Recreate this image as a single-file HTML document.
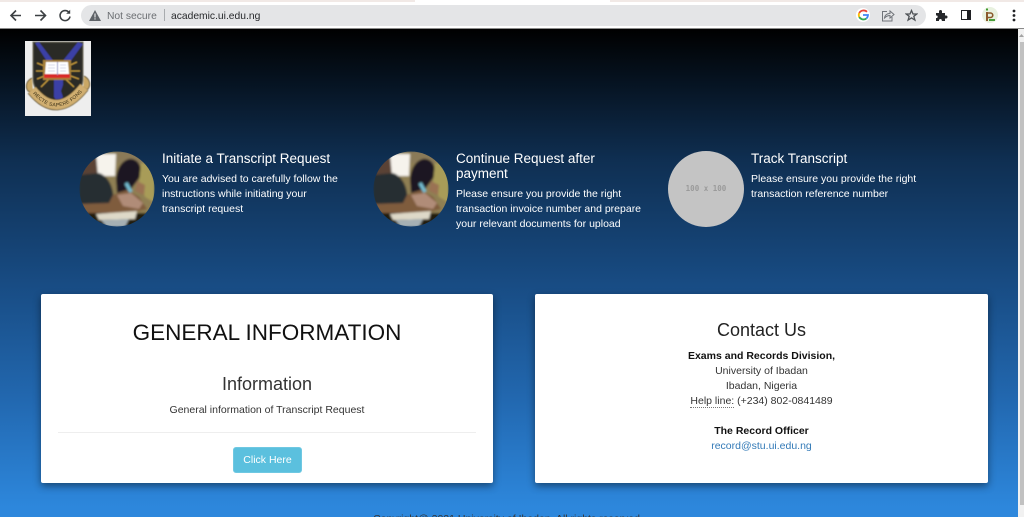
<!DOCTYPE html>
<html><head><meta charset="utf-8"><style>
*{box-sizing:border-box}
html,body{margin:0;padding:0;width:1024px;height:517px;overflow:hidden;background:#fff;font-family:"Liberation Sans",sans-serif}
.a{position:absolute;white-space:nowrap}
#page{position:absolute;left:0;top:29px;width:1018px;height:488px;overflow:hidden;background:linear-gradient(180deg,#000 0,#0f2f52 27%,#17497f 50%,#2268b0 76%,#2d87dc 98%,#2d87dc 100%)}
.h{color:#fff;font-size:13.5px;line-height:15px}
.p{color:#fff;font-size:10.5px;line-height:15px}
.card{position:absolute;background:#fff;border-radius:2px;box-shadow:0 3px 8px rgba(0,0,0,.45)}
.c{text-align:center;left:0;right:0;position:absolute}
.t{font-size:10.5px;line-height:15px;color:#333}
</style></head><body>
<div class="a" style="left:0;top:0;width:1024px;height:29px;background:#fff;border-bottom:1px solid #8a8a8a"></div>
<div class="a" style="left:0;top:0;width:415px;height:2px;background:#f1e9e6"></div>
<div class="a" style="left:610px;top:0;width:414px;height:2px;background:#f1e9e6"></div>
<svg class="a" style="left:0;top:0" width="90" height="29" viewBox="0 0 90 29" fill="none" stroke="#3c4043" stroke-width="1.6">
<path d="M21 15.500H11.500M16 10.500L11 15.500L16 20.500"/>
<path d="M35 15.500H45M40.500 10.500L45.500 15.500L40.500 20.500"/>
<path d="M69 12.500A5 5 0 1 0 70 16.500"/><path d="M70.200 9.800V13.800H66.200z" fill="#3c4043" stroke="none"/>
</svg>
<div class="a" style="left:81px;top:5px;width:845px;height:21px;border-radius:11px;background:#e4e5e7"></div>
<svg class="a" style="left:88px;top:9px" width="14" height="13" viewBox="0 0 14 13"><path d="M7 1L13 12H1z" fill="#5f6368"/><rect x="6.400" y="4.500" width="1.200" height="4" fill="#e4e5e7"/><rect x="6.400" y="9.300" width="1.200" height="1.200" fill="#e4e5e7"/></svg>
<div class="a" style="left:107px;top:9.500px;font-size:10.300px;line-height:13px;color:#6b6e72">Not secure</div>
<div class="a" style="left:164px;top:9px;width:1px;height:12px;background:#a8abae"></div>
<div class="a" style="left:171px;top:9.500px;font-size:10.300px;line-height:13px;color:#26282b">academic.ui.edu.ng</div>
<svg class="a" style="left:856px;top:8px" width="14" height="14" viewBox="1 1 14 14"><circle cx="8" cy="8" r="7" fill="#fff"/><path d="M12 4.800A5 5 0 0 0 4.200 6" fill="none" stroke="#ea4335" stroke-width="1.800"/><path d="M4.200 6A5 5 0 0 0 4.200 10" fill="none" stroke="#fbbc05" stroke-width="1.800"/><path d="M4.200 10A5 5 0 0 0 11.400 11.500" fill="none" stroke="#34a853" stroke-width="1.800"/><path d="M8 8H13A5 5 0 0 1 11.400 11.500" fill="none" stroke="#4285f4" stroke-width="1.800"/></svg>
<svg class="a" style="left:881px;top:9px" width="14" height="13" viewBox="0 0 14 13" fill="none" stroke="#70747a" stroke-width="1"><path d="M6 2.500H1.500V12H11V8"/><path d="M3.500 9C4 6 6 4.500 9 4.500V2L13 5.500L9 9V6.500C7 6.500 5 7.500 3.500 9z"/></svg>
<svg class="a" style="left:905px;top:9px" width="13" height="13" viewBox="0 0 13 13"><path d="M6.500 1.500L8 5H11.800L8.800 7.300L9.900 11L6.500 8.900L3.100 11L4.200 7.300L1.200 5H5z" fill="none" stroke="#4f5357" stroke-width="1.300"/></svg>
<svg class="a" style="left:935px;top:9px" width="13" height="13" viewBox="0 0 13 13"><path d="M1 4H4V2.500A1.500 1.500 0 0 1 7 2.500V4H10V6.500H11A1.500 1.500 0 0 1 11 9.500H10V12H6.800V11A1.500 1.500 0 0 0 4 11V12H1V9H2A1.500 1.500 0 0 0 2 6.500H1z" fill="#26282b"/></svg>
<div class="a" style="left:961px;top:10px;width:10px;height:10px;border:1.500px solid #202124;border-right-width:4px"></div>
<div class="a" style="left:982px;top:7px;width:16px;height:16px;border-radius:50%;background:#e8f1df"></div>
<svg class="a" style="left:984px;top:8px" width="12" height="14" viewBox="0 0 12 14"><rect x="2" y="0.500" width="2" height="2" fill="#3f9a2f"/><path d="M3 4V13" stroke="#8a5a2b" stroke-width="2"/><path d="M3 5H6.500A2.200 2.200 0 0 1 6.500 9.500H3" fill="none" stroke="#8a5a2b" stroke-width="1.600"/><rect x="5" y="11" width="6" height="2" fill="#4a9e3a"/></svg>
<svg class="a" style="left:1012px;top:9px" width="4" height="14"><circle cx="2" cy="2" r="1.400" fill="#202124"/><circle cx="2" cy="6.500" r="1.400" fill="#202124"/><circle cx="2" cy="11" r="1.400" fill="#202124"/></svg>

<!-- scrollbar -->
<div class="a" style="left:1018px;top:29px;width:6px;height:488px;background:#f1f1f1"></div>
<div class="a" style="left:1020px;top:42px;width:4px;height:463px;background:#c1c1c1"></div>
<svg class="a" style="left:1019px;top:33px" width="5" height="5"><path d="M2.500 1L5 4H0z" fill="#a3a3a3"/></svg>

<div id="page">
<svg class="a" style="left:25px;top:12px" width="66" height="75" viewBox="0 0 66 75">
<defs><filter id="lb"><feGaussianBlur stdDeviation=".45"/></filter><path id="sc" d="M7 49Q32 80 59 46"/></defs>
<rect width="66" height="75" fill="#eeeeee"/>
<g filter="url(#lb)">
<path d="M8 1H58V38C58 50 46 60 33 66C20 60 8 50 8 38z" fill="#2c2b26" stroke="#6c6a5c" stroke-width="1"/>
<g stroke="#c49a3a" stroke-width="1.300"><path d="M32 30L12 22M32 30L11 30M32 30L12 38M32 30L16 46M32 30L52 21M32 30L55 30M32 30L54 38M32 30L49 46M32 30L20 15M32 30L45 15"/></g>
<path d="M10 2L14 1L30 22H36L53 1L58 3L40 28L38 34V44L36 50L38 56L33 62L29 56L29 34L27 28z" fill="#3a3fa6"/>
<rect x="18" y="19" width="28" height="20" fill="#a5803b"/>
<path d="M20 33L21 21H32.500H43L44 33L33 34z" fill="#fff"/>
<path d="M19 33H45V37H19z" fill="#d92a2a"/>
<path d="M23 24H30M23 27H30M23 30H30M35 24H41M35 27H41M35 30H41" stroke="#c2c9df" stroke-width=".8"/>
<path d="M32.500 21V34" stroke="#8c92c4" stroke-width="1"/>
<path d="M7 37C1 40 0 46 3 50L8 52" fill="#c9a765" stroke="#4d4020" stroke-width=".8"/>
<path d="M59 35C65 38 66 44 63 48L58 50" fill="#c9a765" stroke="#4d4020" stroke-width=".8"/>
<path d="M7 49Q32 80 59 46" fill="none" stroke="#4d4020" stroke-width="11"/>
<path d="M7 49Q32 80 59 46" fill="none" stroke="#d0ae70" stroke-width="9.500"/>
</g>
<text font-size="5" font-family="Liberation Sans" fill="#3a3018" dy="1.700" letter-spacing=".1"><textPath href="#sc" startOffset="3">RECTE SAPERE FONS</textPath></text>
</svg>

<svg class="a" style="left:79px;top:122px" width="76" height="76" viewBox="0 0 76 76"><defs><clipPath id="c1"><circle cx="38" cy="38" r="37.500"/></clipPath><filter id="b1"><feGaussianBlur stdDeviation="1.100"/></filter><g id="ph"><rect width="76" height="76" fill="#8f7f52"/>
<rect x="0" y="0" width="22" height="30" fill="#5a4335"/>
<path d="M17 3H37L36 25H19z" fill="#f6f3ec"/>
<rect x="37" y="0" width="39" height="12" fill="#8a7a58"/>
<path d="M50 8C60 7 64 18 61 26L52 38L38 42L37 28C38 18 42 10 50 8z" fill="#1b1520"/>
<path d="M0 24L20 22C32 26 36 42 34 54L0 56z" fill="#262d30"/>
<path d="M62 12L76 14V52L66 46L60 32z" fill="#a89c58"/>
<path d="M58 30L66 34L65 44L56 40z" fill="#9a7252"/>
<path d="M34 44L48 39L60 46L68 58L52 62L0 63V53L30 52z" fill="#7f5b3c"/>
<path d="M38 44L52 42L64 52L60 58L44 55z" fill="#b08c78"/>
<path d="M47 32L52 41" stroke="#74bcd0" stroke-width="3.500"/>
<path d="M0 62H76V76H0z" fill="#241a10"/>
<path d="M17 63L58 60L56 68L20 69z" fill="#ded9c8"/>
<path d="M22 69L50 68L46 76H28z" fill="#a6b0b4"/></g></defs><g clip-path="url(#c1)"><g filter="url(#b1)"><use href="#ph"/></g></g></svg>
<div class="a h" style="left:162px;top:122px">Initiate a Transcript Request</div>
<div class="a p" style="left:162px;top:143px">You are advised to carefully follow the<br>instructions while initiating your<br>transcript request</div>

<svg class="a" style="left:373px;top:122px" width="76" height="76" viewBox="0 0 76 76"><g clip-path="url(#c1)"><g filter="url(#b1)"><use href="#ph"/></g></g></svg>
<div class="a h" style="left:456px;top:122px">Continue Request after<br>payment</div>
<div class="a p" style="left:456px;top:158px">Please ensure you provide the right<br>transaction invoice number and prepare<br>your relevant documents for upload</div>

<div class="a" style="left:668px;top:122px;width:76px;height:76px;border-radius:50%;background:#c4c4c4;text-align:center;font:bold 7.500px/76px 'DejaVu Sans Mono','Liberation Mono',monospace;color:#9a9a9a">100 x 100</div>
<div class="a h" style="left:751px;top:122px">Track Transcript</div>
<div class="a p" style="left:751px;top:143px">Please ensure you provide the right<br>transaction reference number</div>

<div class="card" style="left:41px;top:265px;width:452px;height:189px">
<div class="c" style="top:25px;font-size:22.500px;line-height:28px;color:#111">GENERAL INFORMATION</div>
<div class="c" style="top:80px;font-size:18px;line-height:20px;color:#333">Information</div>
<div class="c t" style="top:109px">General information of Transcript Request</div>
<div class="a" style="left:17px;top:138px;width:418px;height:1px;background:#eee"></div>
<div class="a" style="left:192px;top:153px;width:69px;height:26px;background:#5bc0de;border:1px solid #6fc8e2;border-radius:3px;color:#fff;font-size:10.5px;line-height:24px;text-align:center">Click Here</div>
</div>

<div class="card" style="left:535px;top:265px;width:453px;height:189px">
<div class="c" style="top:25px;font-size:18px;line-height:22px;color:#222">Contact Us</div>
<div class="c t" style="top:55px;color:#333"><b style="color:#111">Exams and Records Division,</b><br>University of Ibadan<br>Ibadan, Nigeria<br><span style="border-bottom:1px dotted #777;line-height:12px;display:inline-block">Help line:</span> (+234) 802-0841489<br><br><b style="color:#111">The Record Officer</b><br><span style="color:#337ab7">record@stu.ui.edu.ng</span></div>
</div>

<div class="a" style="left:0;width:1016px;top:483px;text-align:center;font-size:10.5px;line-height:15px;color:#333">Copyright@ 2021 University of Ibadan. All rights reserved.</div>
</div>
</body></html>
